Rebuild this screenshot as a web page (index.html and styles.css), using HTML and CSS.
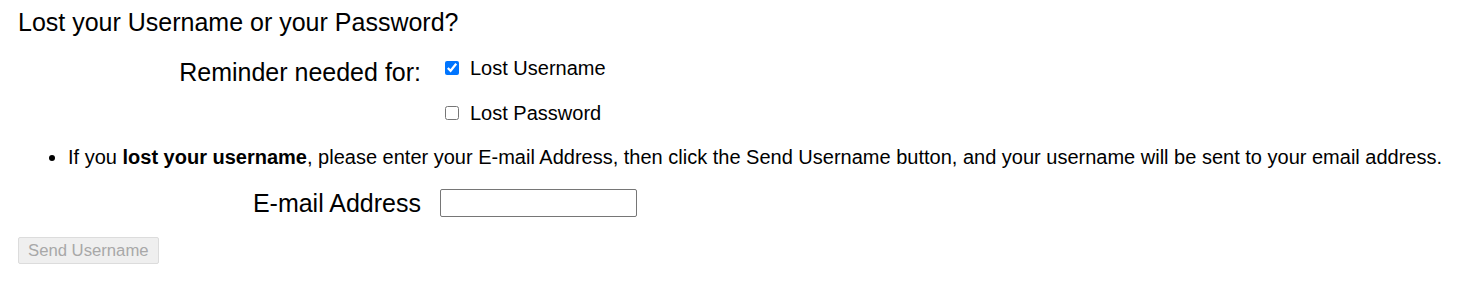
FILE: index.html
```html
<!DOCTYPE html>
<html lang="en">
<head>
  <meta charset="UTF-8">
  <title>Lost Username or Password</title>
  <link rel="stylesheet" href="styles.css">
</head>
<body>
  <div class="page">
    <h2 class="title">Lost your Username or your Password?</h2>

    <!-- which reminder -->
    <div class="field-row reminder">
      <label class="field-label">Reminder needed for:</label>
      <div class="options">
        <label class="option"><input type="checkbox" checked> Lost Username</label>
        <label class="option"><input type="checkbox"> Lost Password</label>
      </div>
    </div>

    <ul class="hint">
      <li>If you <b>lost your username</b>, please enter your E-mail Address, then click the Send Username button, and your username will be sent to your email address.</li>
    </ul>

    <div class="field-row email">
      <label class="field-label" for="email">E-mail Address</label>
      <input type="text" id="email" class="text-input">
    </div>

    <button class="send-btn" disabled>Send Username</button>
  </div>
</body>
</html>
```

FILE: styles.css
```css
body {
  margin: 0;
  font-family: "Liberation Sans", Arial, sans-serif;
  color: #000;
  background: #fff;
}

.page {
  padding: 7px 18px;
}

.title {
  margin: 0;
  font-size: 25px;
  font-weight: normal;
  line-height: 30px;
}

/* label column + control column */
.field-row {
  display: grid;
  grid-template-columns: 403px 1fr;
  column-gap: 19px;
  align-items: start;
}

.field-label {
  text-align: right;
  font-size: 25px;
  line-height: 28px;
}

.reminder {
  margin-top: 18px;
}

.reminder .field-label {
  padding-top: 3px;
}

.options {
  display: flex;
  flex-direction: column;
  gap: 19px;
}

.option {
  display: flex;
  align-items: center;
  gap: 11px;
  font-size: 20px;
  line-height: 26px;
}

.option input {
  margin: 0 0 0 5px;
  width: 14px;
  height: 14px;
}

.hint {
  margin: 19px 0 0;
  padding-left: 50px;
  font-size: 20px;
  line-height: 24px;
  white-space: nowrap;
}

.email {
  margin-top: 20px;
  align-items: center;
}

.text-input {
  width: 197px;
  height: 28px;
  box-sizing: border-box;
  border: 1px solid #767676;
  border-radius: 2px;
  padding: 1px 2px;
}

.send-btn {
  display: block;
  margin-top: 20px;
  height: 27px;
  padding: 1px 9px;
  font-family: "Liberation Sans", Arial, sans-serif;
  font-size: 16.7px;
  color: #a8a8a8;
  background: #efefef;
  border: 1px solid #dcdcdc;
  border-radius: 2px;
}
```
